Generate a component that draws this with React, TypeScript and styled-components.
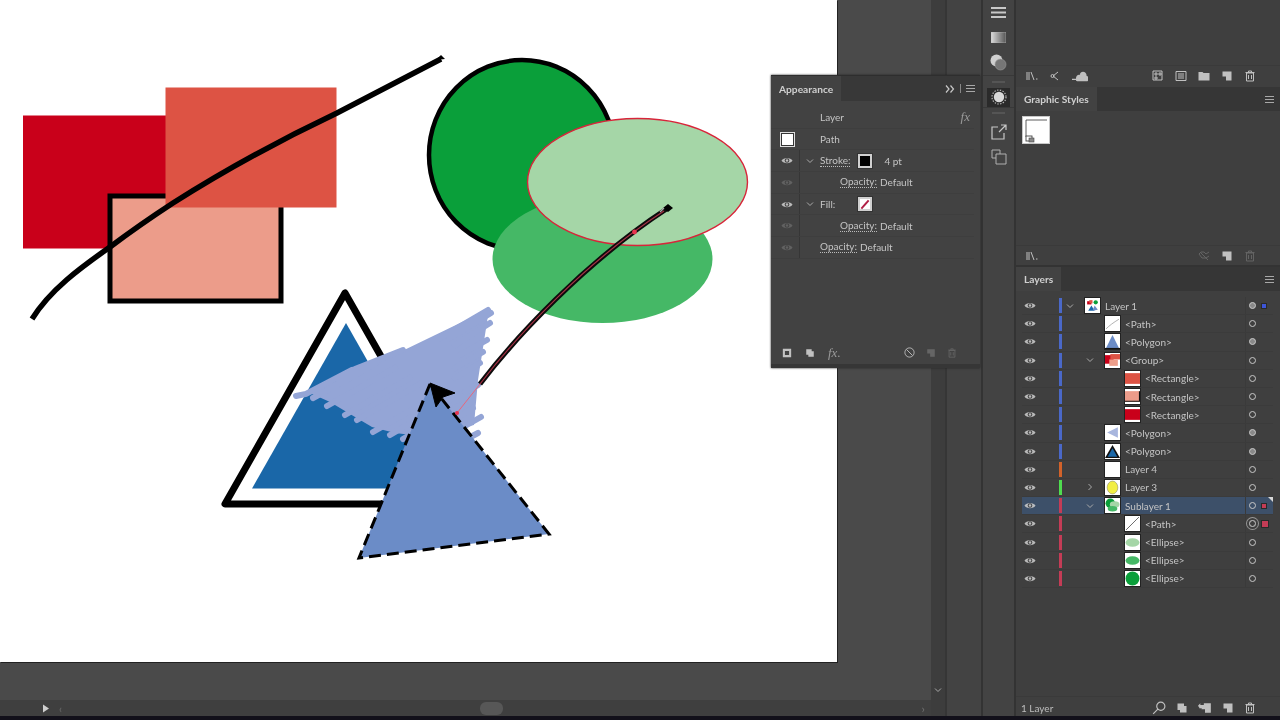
import React from "react";
import styled, { createGlobalStyle } from "styled-components";

const GlobalStyle = createGlobalStyle`
  html, body {
    margin: 0;
    padding: 0;
    background: #12101a;
    overflow: hidden;
  }
  * {
    box-sizing: border-box;
  }
`;

type Kind =
  | "layer1"
  | "path"
  | "polygon"
  | "group"
  | "coral"
  | "salmon"
  | "red"
  | "polyLight"
  | "polyBlue"
  | "blank"
  | "yellow"
  | "sublayer"
  | "line"
  | "ellLight"
  | "ellMid"
  | "ellDark";

type LayerRow = {
  name: string;
  depth: number;
  bar: string;
  kind: Kind;
  chevron?: "down" | "right";
  target?: "filled" | "ring";
  mark?: string;
  markSize?: number;
  selected?: boolean;
};

const BLUE = "#4a68c8";
const RED = "#c43c56";

const layers: LayerRow[] = [
  { name: "Layer 1", depth: 0, bar: BLUE, kind: "layer1", chevron: "down", target: "filled", mark: "#3d55d8", markSize: 4 },
  { name: "<Path>", depth: 1, bar: BLUE, kind: "path" },
  { name: "<Polygon>", depth: 1, bar: BLUE, kind: "polygon", target: "filled" },
  { name: "<Group>", depth: 1, bar: BLUE, kind: "group", chevron: "down" },
  { name: "<Rectangle>", depth: 2, bar: BLUE, kind: "coral" },
  { name: "<Rectangle>", depth: 2, bar: BLUE, kind: "salmon" },
  { name: "<Rectangle>", depth: 2, bar: BLUE, kind: "red" },
  { name: "<Polygon>", depth: 1, bar: BLUE, kind: "polyLight", target: "filled" },
  { name: "<Polygon>", depth: 1, bar: BLUE, kind: "polyBlue", target: "filled" },
  { name: "Layer 4", depth: 1, bar: "#d2622a", kind: "blank" },
  { name: "Layer 3", depth: 1, bar: "#4fdc4f", kind: "yellow", chevron: "right" },
  { name: "Sublayer 1", depth: 1, bar: RED, kind: "sublayer", chevron: "down", mark: RED, markSize: 4, selected: true },
  { name: "<Path>", depth: 2, bar: RED, kind: "line", target: "ring", mark: RED, markSize: 6 },
  { name: "<Ellipse>", depth: 2, bar: RED, kind: "ellLight" },
  { name: "<Ellipse>", depth: 2, bar: RED, kind: "ellMid" },
  { name: "<Ellipse>", depth: 2, bar: RED, kind: "ellDark" },
];

const Thumbnail: React.FC<{ kind: Kind }> = ({ kind }) => {
  const art: Record<Kind, React.ReactNode> = {
    layer1: (
      <>
        <rect x="2" y="3" width="4" height="3" fill="#c9001a" />
        <rect x="4" y="2" width="3" height="3" fill="#dd5344" />
        <circle cx="10" cy="4" r="2" fill="#0a9f3a" />
        <polygon points="6,7 3,12 9,12" fill="#1a67a8" />
        <polygon points="9,7 7,12 12,11" fill="#6b8cc7" />
      </>
    ),
    path: <path d="M1 12 C4 9 8 6 13 3" stroke="#999" strokeWidth="0.7" fill="none" />,
    polygon: (
      <>
        <polygon points="7,1 1,13 13,13" fill="#6b8cc7" />
        <path d="M0 13.5 H14" stroke="#111" strokeWidth="1" />
      </>
    ),
    group: (
      <>
        <rect x="0" y="2" width="8" height="8" fill="#c9001a" />
        <rect x="5" y="1" width="9" height="5" fill="#dd5344" />
        <rect x="4" y="6" width="8" height="6" fill="#ee9e8a" />
      </>
    ),
    coral: <rect x="0" y="2" width="14" height="10" fill="#dd5344" />,
    salmon: (
      <>
        <rect x="0" y="2" width="14" height="10" fill="#ec9c8a" />
        <path d="M13.5 2 V12 M0 11.5 H14" stroke="#111" strokeWidth="1" />
      </>
    ),
    red: <rect x="0" y="2" width="14" height="10" fill="#c9001a" />,
    polyLight: <polygon points="12,2 12,12 2,7" fill="#a8b6de" />,
    polyBlue: (
      <>
        <polygon points="7,1 0,13 14,13" fill="#111" />
        <polygon points="7,4 2.5,12 11.5,12" fill="#1a67a8" />
      </>
    ),
    blank: null,
    yellow: <ellipse cx="7" cy="7" rx="5" ry="6" fill="#f2ee45" stroke="#666" strokeWidth="0.4" />,
    sublayer: (
      <>
        <circle cx="5" cy="5" r="4.5" fill="#0a9f3a" />
        <ellipse cx="9" cy="6" rx="4.5" ry="3" fill="#a5d6a7" />
        <ellipse cx="7" cy="10" rx="4.5" ry="2.5" fill="#45b866" />
      </>
    ),
    line: <path d="M1 13 L13 1" stroke="#555" strokeWidth="0.8" fill="none" />,
    ellLight: <ellipse cx="7" cy="7" rx="6.5" ry="4" fill="#a5d6a7" />,
    ellMid: <ellipse cx="7" cy="7" rx="6.5" ry="4" fill="#45b866" />,
    ellDark: <circle cx="7" cy="7" r="6.5" fill="#0a9f3a" />,
  };
  return (
    <ThumbSvg viewBox="0 0 14 14">
      <rect width="14" height="14" fill="#fff" />
      {art[kind]}
    </ThumbSvg>
  );
};

const Eye: React.FC<{ dim?: boolean }> = ({ dim }) => (
  <svg width="12" height="9" viewBox="0 0 12 9" opacity={dim ? 0.22 : 0.85}>
    <path d="M0.5 4.5 C2.5 1 9.5 1 11.5 4.5 C9.5 8 2.5 8 0.5 4.5Z" fill="#cfcfcf" />
    <circle cx="6" cy="4.5" r="2.3" fill="#444" />
    <circle cx="6" cy="4.5" r="1.2" fill="#cfcfcf" />
  </svg>
);

const Chevron: React.FC<{ dir: "down" | "right" }> = ({ dir }) => (
  <svg width="8" height="8" viewBox="0 0 8 8" fill="none" stroke="#aaa" strokeWidth="1">
    <path d={dir === "down" ? "M1 2.5 L4 5.5 L7 2.5" : "M2.5 1 L5.5 4 L2.5 7"} />
  </svg>
);

const Glyph: React.FC<{ d: string; size?: number; dim?: boolean; line?: boolean }> = ({ d, size = 12, dim, line }) => (
  <svg
    width={size}
    height={size}
    viewBox="0 0 12 12"
    opacity={dim ? 0.25 : 0.9}
    fill={line ? "none" : "#cfcfcf"}
    stroke={line ? "#cfcfcf" : "none"}
    strokeWidth={line ? 1 : 0}
  >
    <path d={d} />
  </svg>
);

const icons = {
  library: "M1 2 V10 M3 2 V10 M5 2 L8 10 M10 9 H11.5",
  share: "M9 2 L4 6 L9 10 M4 6 H4.1 M2 6 A1.5 1.5 0 1 0 5 6 A1.5 1.5 0 1 0 2 6",
  cloud: "M0 8 H3 C3 5 5 5 6 5 C6 2 11 2 11 6 C13 6 13 10 11 10 H4 C3 10 3 9 3 9 H0Z",
  grid: "M1 1 H10 V10 H1Z M3 3 V5 H5 V3Z M7 3 V5 H9 V3Z M3 7 V9 H5 V7Z",
  list: "M1 1.5 H11 V10.5 H1Z M3 4 H9 M3 6 H9 M3 8 H9",
  folder: "M0.5 2 H4.5 L5.5 3 H11.5 V10.5 H0.5Z",
  page: "M1.5 1.5 H10.5 V10.5 H5 V6.5 H1.5Z",
  trash: "M2.5 3 H9.5 V11 H2.5Z M1.5 2.5 H10.5 M4.5 2 V1 H7.5 V2 M4.5 5 V9 M7.5 5 V9",
  search: "M7.5 1 A3.5 3.5 0 1 0 7.6 8 A3.5 3.5 0 1 0 7.5 1 M5 7 L1 11",
  clip: "M1.5 1.5 H8 V8 H1.5Z M4 4 H10.5 V10.5 H4Z",
  merge: "M0 4 L2 2 V3.5 H5 V2 H11 V10 H6 V7 H3 V6 H2 V7Z",
  unlink: "M1 4 L3 2 H6 L8 4 L11 2 M1 4 L4 8 H8 L11 6 M2 2 L10 10",
  ban: "M6 1 A5 5 0 1 0 6.01 1 M2.8 2.8 L9.2 9.2",
  outer: "M1 1 H11 V11 H1Z M3.5 3.5 V8.5 H8.5 V3.5Z",
};

const Appearance: React.FC = () => (
  <AppearancePanel>
    <AppearanceHead>
      <TabLabel>Appearance</TabLabel>
      <HeadTools>
        <svg width="10" height="8" viewBox="0 0 10 8" fill="none" stroke="#c8c8c8" strokeWidth="1.2">
          <path d="M1 0.5 L4 4 L1 7.5 M5.5 0.5 L8.5 4 L5.5 7.5" />
        </svg>
        <HeadRule />
        <PanelMenu />
      </HeadTools>
    </AppearanceHead>
    <AppearanceBody>
      <AttrRow>
        <span />
        <span />
        <AttrLabel>Layer</AttrLabel>
        <FxMark>fx</FxMark>
      </AttrRow>
      <AttrRow>
        <PathSwatch />
        <span />
        <AttrLabel>Path</AttrLabel>
      </AttrRow>
      <AttrRow $guide>
        <Eye />
        <Chevron dir="down" />
        <AttrLabel>
          <Dotted>Stroke:</Dotted>
          <ColorChip $black />
          <StrokeValue>4 pt</StrokeValue>
        </AttrLabel>
      </AttrRow>
      <AttrRow $guide>
        <Eye dim />
        <span />
        <AttrLabel $sub>
          <Dotted>Opacity:</Dotted> Default
        </AttrLabel>
      </AttrRow>
      <AttrRow $guide>
        <Eye />
        <Chevron dir="down" />
        <AttrLabel>
          <FillText>Fill:</FillText>
          <ColorChip>
            <svg width="11" height="11" viewBox="0 0 11 11">
              <path d="M1.5 10 L9.5 1" stroke="#b01f45" strokeWidth="2.2" />
            </svg>
          </ColorChip>
        </AttrLabel>
      </AttrRow>
      <AttrRow $guide>
        <Eye dim />
        <span />
        <AttrLabel $sub>
          <Dotted>Opacity:</Dotted> Default
        </AttrLabel>
      </AttrRow>
      <AttrRow $guide>
        <Eye dim />
        <span />
        <AttrLabel>
          <Dotted>Opacity:</Dotted> Default
        </AttrLabel>
      </AttrRow>
    </AppearanceBody>
    <AppearanceFoot>
      <AppearanceFootLeft>
        <Glyph d={icons.outer} size={10} />
        <Glyph d={icons.clip} size={10} />
        <FxMark>fx.</FxMark>
      </AppearanceFootLeft>
      <FootRight>
        <Glyph d={icons.ban} line size={11} />
        <Glyph d={icons.page} dim size={10} />
        <Glyph d={icons.trash} dim line size={10} />
      </FootRight>
    </AppearanceFoot>
    <DragBar />
  </AppearancePanel>
);

const Artwork: React.FC = () => (
  <ArtSvg viewBox="0 0 837 662">
    <rect x="23" y="115.5" width="150" height="133" fill="#c9001a" />
    <rect x="110" y="196" width="171" height="105" fill="#ec9c8a" stroke="#000" strokeWidth="5" />
    <rect x="165.5" y="87.5" width="171" height="120" fill="#dd5344" />
    <path
      d="M32 319 C50 290 80 268 110 247 C130 232 150 218 173 203 C225 170 280 140 337 113 L441 59"
      fill="none"
      stroke="#000"
      strokeWidth="5.5"
    />
    <path d="M436 60 L441 55 L445 59Z" fill="#000" />

    <ellipse cx="522" cy="155" rx="93" ry="95" fill="#0a9f3a" stroke="#000" strokeWidth="4.5" />
    <ellipse cx="602.5" cy="259" rx="110" ry="64" fill="#45b866" />
    <ellipse cx="637.5" cy="182" rx="110" ry="63.5" fill="#a5d6a7" stroke="#d8253a" strokeWidth="1.4" />

    <polygon points="345,293 225,504 465,504" fill="#fff" stroke="#000" strokeWidth="7" strokeLinejoin="round" />
    <polygon points="346,323 252,488.5 440,488.5" fill="#1a67a8" />

    <polygon points="489,309 478,380 474,425 420,436 395,433 372,427 350,414 330,402 310,393 400,352" fill="#94a5d6" />
    <path
      d="M296 396 L306 394 L352 370 M355 369 L403 350 M313 398 L375 364 M327 406 L395 368 M345 415 L410 378 M357 420 L420 384 M373 432 L440 394 M390 435 L450 400 M403 439 L460 405 M488 310 L440 338 M491 313 L450 338 M490 323 L455 345 M487 340 L460 355 M483 352 L455 368 M480 363 L455 378 M478 385 L465 392 M473 408 L460 416 M481 417 L465 426 M478 433 L465 440"
      fill="none"
      stroke="#94a5d6"
      strokeWidth="6"
      strokeLinecap="round"
    />

    <polygon points="430,384 359,558 549,534" fill="#6b8cc7" />
    <polygon
      points="430,384 359,558 549,534"
      fill="none"
      stroke="#000"
      strokeWidth="3"
      strokeDasharray="12 6"
    />
    <path d="M430 383 L455 393 L443 397 L436 407Z" fill="#000" stroke="#000" strokeWidth="1" strokeLinejoin="round" />

    <path d="M457 413 L480 384" stroke="#e8677c" strokeWidth="1" />
    <circle cx="457" cy="413" r="2" fill="#e8354f" />
    <path d="M480 384 C515 338 585 262 668 208" fill="none" stroke="#0c0c0c" strokeWidth="5" />
    <path d="M480 384 C515 338 585 262 664 211" fill="none" stroke="#a83045" strokeWidth="1.2" />
    <circle cx="634.5" cy="232" r="2.4" fill="#e8354f" />
    <path d="M668 204 L673 208 L668 212 L663 208Z" fill="#000" />
    <path d="M660 212 L664 208" stroke="#aaa" strokeWidth="1.2" />
  </ArtSvg>
);

const App: React.FC = () => (
  <Screen>
    <GlobalStyle />
    <Workspace>
      <CanvasColumn>
        <Pasteboard>
          <Artboard>
            <Artwork />
          </Artboard>
        </Pasteboard>
        <HScroll>
          <svg width="8" height="9" viewBox="0 0 8 9">
            <path d="M1 0.5 L7 4.5 L1 8.5Z" fill="#cfcfcf" />
          </svg>
          <ScrollArrow>‹</ScrollArrow>
          <ScrollThumb />
          <ScrollEnd>›</ScrollEnd>
        </HScroll>
      </CanvasColumn>
      <VScroll>
        <Chevron dir="down" />
      </VScroll>
      <EmptyDock />
      <ToolStrip>
        <ToolButton>
          <svg width="15" height="11" viewBox="0 0 15 11" fill="#c8c8c8">
            <rect width="15" height="2" />
            <rect y="4.5" width="15" height="2" />
            <rect y="9" width="15" height="2" />
          </svg>
        </ToolButton>
        <ToolButton>
          <svg width="15" height="11" viewBox="0 0 15 11">
            <defs>
              <linearGradient id="strip-grad">
                <stop offset="0" stopColor="#ddd" />
                <stop offset="1" stopColor="#555" />
              </linearGradient>
            </defs>
            <rect width="15" height="11" fill="url(#strip-grad)" stroke="#bbb" strokeWidth="0.6" />
          </svg>
        </ToolButton>
        <ToolButton>
          <svg width="17" height="17" viewBox="0 0 17 17">
            <circle cx="6.5" cy="6.5" r="6" fill="#cfcfcf" />
            <circle cx="10.5" cy="10.5" r="5.5" fill="#767676" stroke="#999" strokeWidth="0.6" />
          </svg>
        </ToolButton>
        <StripGrip />
        <ToolButton $active>
          <svg width="16" height="16" viewBox="0 0 16 16">
            <circle cx="8" cy="8" r="5.2" fill="#d8d8d8" />
            <circle cx="8" cy="8" r="7" fill="none" stroke="#bbb" strokeWidth="1.2" strokeDasharray="1.4 1.4" />
          </svg>
        </ToolButton>
        <StripGrip />
        <ToolButton>
          <svg width="16" height="16" viewBox="0 0 16 16" fill="none" stroke="#c8c8c8" strokeWidth="1.2">
            <path d="M7 3 H1 V15 H13 V9 M8 8 L15 1 M10 1 H15 V6" />
          </svg>
        </ToolButton>
        <ToolButton>
          <svg width="16" height="16" viewBox="0 0 16 16" fill="none" stroke="#b0b0b0" strokeWidth="1">
            <path d="M1 1 H9 V5 M5 9 H1 V1 M5 5 H15 V15 H5Z" />
          </svg>
        </ToolButton>
      </ToolStrip>
      <PanelColumn>
        <LibrariesPanel>
          <PanelFoot>
            <FootLeft>
              <Glyph d={icons.library} line />
              <Glyph d={icons.share} line />
              <Glyph d={icons.cloud} size={16} />
            </FootLeft>
            <FootRight>
              <Glyph d={icons.grid} line />
              <Glyph d={icons.list} line />
              <Glyph d={icons.folder} />
              <Glyph d={icons.page} />
              <Glyph d={icons.trash} line />
            </FootRight>
          </PanelFoot>
        </LibrariesPanel>
        <StylesPanel>
          <PanelHead>
            <TabLabel>Graphic Styles</TabLabel>
            <PanelMenu />
          </PanelHead>
          <StylesBody>
            <StyleSwatch>
              <svg width="26" height="26" viewBox="0 0 26 26">
                <path d="M3 20 V3 H24" fill="none" stroke="#333" strokeWidth="0.8" />
                <rect x="3" y="19" width="6" height="5" fill="#fff" stroke="#444" strokeWidth="0.9" />
                <rect x="6" y="21" width="5" height="4" fill="#888" stroke="#444" strokeWidth="0.6" />
              </svg>
            </StyleSwatch>
          </StylesBody>
          <PanelFoot>
            <FootLeft>
              <Glyph d={icons.library} line />
            </FootLeft>
            <FootRight>
              <Glyph d={icons.unlink} dim line />
              <Glyph d={icons.page} />
              <Glyph d={icons.trash} dim line />
            </FootRight>
          </PanelFoot>
        </StylesPanel>
        <LayersPanel>
          <PanelHead>
            <TabLabel>Layers</TabLabel>
            <PanelMenu />
          </PanelHead>
          <LayerList>
            {layers.map((row, i) => (
              <LayerItem key={i} $selected={row.selected}>
                <Eye />
                <span />
                <ColorBar $color={row.bar} />
                <TreeCell $depth={row.depth}>
                  <ChevronSlot>{row.chevron && <Chevron dir={row.chevron} />}</ChevronSlot>
                  <Thumbnail kind={row.kind} />
                  <LayerName>{row.name}</LayerName>
                </TreeCell>
                <TargetCell>
                  <Target $variant={row.target} />
                </TargetCell>
                <MarkCell>
                  {row.mark && (
                    <SelectionMark $color={row.mark} $size={row.markSize ?? 4} />
                  )}
                </MarkCell>
                {row.selected && <CornerFlag />}
              </LayerItem>
            ))}
          </LayerList>
          <LayersFoot>
            <CountLabel>1 Layer</CountLabel>
            <LayersFootTools>
              <Glyph d={icons.search} line size={14} />
              <Glyph d={icons.clip} />
              <Glyph d={icons.merge} size={14} />
              <Glyph d={icons.page} />
              <Glyph d={icons.trash} line />
            </LayersFootTools>
          </LayersFoot>
        </LayersPanel>
      </PanelColumn>
      <Appearance />
    </Workspace>
    <ScreenEdge />
  </Screen>
);

export default App;

const Screen = styled.div`
  width: 1280px;
  height: 720px;
  display: flex;
  flex-direction: column;
  overflow: hidden;
  font-family: Lato, "Open Sans", sans-serif;
  font-size: 10px;
  color: #c8c8c8;
  filter: blur(0.3px);
`;
const Workspace = styled.div`
  position: relative;
  flex: 1;
  min-height: 0;
  display: flex;
`;
const ScreenEdge = styled.div`
  height: 4px;
  background: #12101a;
`;
const CanvasColumn = styled.div`
  width: 931px;
  display: flex;
  flex-direction: column;
  background: #4a4a4a;
`;
const Pasteboard = styled.div`
  flex: 1;
  min-height: 0;
`;
const Artboard = styled.div`
  width: 837px;
  height: 662px;
  background: #fff;
  box-shadow: 1px 1px 0 #222;
`;
const ArtSvg = styled.svg`
  display: block;
  width: 837px;
  height: 662px;
`;
const HScroll = styled.div`
  height: 16px;
  display: flex;
  align-items: center;
  padding: 0 6px 0 42px;
  background: #3f3f3f;
`;
const ScrollArrow = styled.span`
  margin-left: 9px;
  color: #6a6a6a;
  font-size: 11px;
`;
const ScrollThumb = styled.div`
  width: 23px;
  height: 13px;
  margin-left: 418px;
  border-radius: 6px;
  background: #575757;
`;
const ScrollEnd = styled.span`
  margin-left: auto;
  color: #707070;
  font-size: 12px;
`;
const VScroll = styled.div`
  width: 16px;
  display: flex;
  align-items: flex-end;
  justify-content: center;
  padding-bottom: 22px;
  background: #3d3d3d;
  border-right: 2px solid #363636;
`;
const EmptyDock = styled.div`
  width: 36px;
  background: #434343;
  border-right: 2px solid #333;
`;
const ToolStrip = styled.div`
  width: 33px;
  display: flex;
  flex-direction: column;
  align-items: center;
  background: #434343;
  border-right: 2px solid #333;
`;
const ToolButton = styled.div<{ $active?: boolean }>`
  flex: none;
  width: 23px;
  height: ${(p) => (p.$active ? "19px" : "25px")};
  display: flex;
  align-items: center;
  justify-content: center;
  background: ${(p) => (p.$active ? "#2a2a2a" : "transparent")};
`;
const StripGrip = styled.div`
  width: 100%;
  height: 12.5px;
  display: flex;
  align-items: center;
  justify-content: center;
  border-top: 1px solid #383838;
  &::after {
    content: "";
    width: 13px;
    height: 2px;
    background: #555;
  }
`;
const PanelColumn = styled.div`
  flex: 1;
  display: flex;
  flex-direction: column;
  background: #3f3f3f;
`;
const LibrariesPanel = styled.div`
  height: 87px;
  display: flex;
  flex-direction: column;
  justify-content: flex-end;
  padding-bottom: 2px;
`;
const PanelFoot = styled.div`
  height: 20px;
  flex: none;
  display: flex;
  align-items: center;
  justify-content: space-between;
  padding: 0 24px 0 10px;
  border-top: 1px solid #3a3a3a;
`;
const FootLeft = styled.div`
  display: flex;
  align-items: center;
  gap: 11px;
`;
const FootRight = styled.div`
  display: flex;
  align-items: center;
  gap: 11px;
`;
const AppearanceFootLeft = styled(FootLeft)`
  gap: 13px;
`;
const LayersFootTools = styled(FootRight)`
  gap: 10px;
`;
const StylesPanel = styled.div`
  height: 180px;
  display: flex;
  flex-direction: column;
  border-bottom: 2px solid #333;
`;
const PanelHead = styled.div`
  height: 24px;
  flex: none;
  display: flex;
  align-items: center;
  justify-content: space-between;
  padding-right: 6px;
  background: #363636;
`;
const TabLabel = styled.div`
  height: 100%;
  display: flex;
  align-items: center;
  padding: 0 8px;
  background: #424242;
  color: #d0d0d0;
  font-size: 10.2px;
  font-weight: 700;
`;
const PanelMenu = styled.div`
  width: 9px;
  height: 7px;
  border-top: 1px solid #a8a8a8;
  border-bottom: 1px solid #a8a8a8;
  position: relative;
  &::after {
    content: "";
    position: absolute;
    left: 0;
    right: 0;
    top: 2px;
    height: 1px;
    background: #a8a8a8;
  }
`;
const StylesBody = styled.div`
  flex: 1;
  padding: 5px 6px;
`;
const StyleSwatch = styled.div`
  width: 28px;
  height: 28px;
  display: flex;
  align-items: center;
  justify-content: center;
  background: #fff;
  border: 1px solid #c8c8c8;
`;
const LayersPanel = styled.div`
  flex: 1;
  min-height: 0;
  display: flex;
  flex-direction: column;
`;
const LayerList = styled.div`
  flex: 1;
  padding: 6px 7px 0 6px;
`;
const LayerItem = styled.div<{ $selected?: boolean }>`
  position: relative;
  height: 18.2px;
  display: grid;
  grid-template-columns: 16px 21px 3px 183px 14px 14px;
  align-items: center;
  justify-items: center;
  background: ${(p) => (p.$selected ? "#3d5069" : "transparent")};
  border-bottom: 1px solid #3b3b3b;
`;
const ColorBar = styled.div<{ $color: string }>`
  width: 3px;
  height: 15px;
  background: ${(p) => p.$color};
`;
const TreeCell = styled.div<{ $depth: number }>`
  width: 100%;
  display: flex;
  align-items: center;
  padding-left: ${(p) => p.$depth * 20}px;
`;
const ChevronSlot = styled.div`
  width: 23px;
  display: flex;
  align-items: center;
  justify-content: center;
  padding-right: 7px;
`;
const ThumbSvg = styled.svg`
  flex: none;
  width: 15px;
  height: 15px;
  outline: 1px solid #222;
  outline-offset: -0.5px;
`;
const LayerName = styled.span`
  margin-left: 5px;
  color: #c4c4c4;
  white-space: nowrap;
`;
const TargetCell = styled.div`
  width: 100%;
  height: 100%;
  display: flex;
  align-items: center;
  justify-content: center;
  border-left: 1px solid #3a3a3a;
`;
const Target = styled.div<{ $variant?: "filled" | "ring" }>`
  width: 7px;
  height: 7px;
  border-radius: 50%;
  border: 1px solid #c8c8c8;
  background: ${(p) => (p.$variant === "filled" ? "#8a8a8a" : "transparent")};
  box-shadow: ${(p) => (p.$variant === "ring" ? "0 0 0 2px #3f3f3f, 0 0 0 3px #999" : "none")};
`;
const MarkCell = styled.div`
  width: 100%;
  display: flex;
  align-items: center;
  padding-left: 2px;
`;
const SelectionMark = styled.div<{ $color: string; $size: number }>`
  width: ${(p) => p.$size + 2}px;
  height: ${(p) => p.$size + 2}px;
  background: ${(p) => p.$color};
  border: 1px solid #2a2a2a;
`;
const CornerFlag = styled.div`
  position: absolute;
  top: 0;
  right: 0;
  width: 0;
  height: 0;
  border-top: 5px solid #d8d8d8;
  border-left: 5px solid transparent;
`;
const LayersFoot = styled.div`
  height: 20px;
  flex: none;
  display: flex;
  align-items: center;
  justify-content: space-between;
  padding: 2px 24px 0 5px;
  border-top: 1px solid #3a3a3a;
`;
const CountLabel = styled.span`
  color: #bcbcbc;
`;
const AppearancePanel = styled.div`
  position: absolute;
  left: 771px;
  top: 75px;
  width: 209px;
  height: 293px;
  display: flex;
  flex-direction: column;
  background: #424242;
  border-top: 1px solid #2e2e2e;
  box-shadow: 0 0 2px #222;
`;
const AppearanceHead = styled.div`
  height: 25px;
  flex: none;
  display: flex;
  align-items: center;
  justify-content: space-between;
  padding-right: 5px;
  background: #383838;
`;
const HeadTools = styled.div`
  display: flex;
  align-items: center;
  gap: 5px;
`;
const HeadRule = styled.span`
  width: 1px;
  height: 9px;
  background: #888;
`;
const AppearanceBody = styled.div`
  flex: 1;
  padding: 6px 6px 0 0;
`;
const AttrRow = styled.div<{ $guide?: boolean }>`
  height: 21.7px;
  display: grid;
  grid-template-columns: 28px 21px 1fr auto;
  align-items: center;
  justify-items: start;
  border-bottom: 1px solid #3e3e3e;
  background: ${(p) =>
    p.$guide ? "linear-gradient(#363636, #363636) 28px 0 / 1px 100% no-repeat" : "none"};
  & > svg:first-child {
    justify-self: center;
    margin-left: 3px;
  }
  & > :nth-child(2) {
    justify-self: center;
  }
`;
const AttrLabel = styled.div<{ $sub?: boolean }>`
  display: flex;
  align-items: center;
  gap: 3px;
  padding-left: ${(p) => (p.$sub ? "20px" : "0")};
  color: #c4c4c4;
  white-space: nowrap;
`;
const Dotted = styled.span`
  border-bottom: 1px dotted #bbb;
  line-height: 11px;
`;
const FillText = styled.span`
  width: 30px;
`;
const StrokeValue = styled.span`
  margin-left: 9px;
`;
const PathSwatch = styled.div`
  justify-self: center;
  margin-left: 5px;
  width: 15px;
  height: 15px;
  background: #fff;
  border: 1px solid #ddd;
  outline: 1px solid #333;
  outline-offset: -2px;
`;
const ColorChip = styled.div<{ $black?: boolean }>`
  width: 14px;
  height: 14px;
  display: flex;
  align-items: center;
  justify-content: center;
  margin-left: 5px;
  background: ${(p) => (p.$black ? "#000" : "#fff")};
  border: 2px solid #d0d0d0;
  outline: 1px solid #333;
`;
const FxMark = styled.span`
  margin-right: 4px;
  color: #9a9a9a;
  font-family: "Liberation Serif", serif;
  font-style: italic;
  font-size: 13px;
`;
const AppearanceFoot = styled.div`
  height: 20px;
  flex: none;
  display: flex;
  align-items: center;
  justify-content: space-between;
  padding: 0 23px 3px 11px;
`;
const DragBar = styled.div`
  height: 4px;
  flex: none;
  background: #363636;
`;
